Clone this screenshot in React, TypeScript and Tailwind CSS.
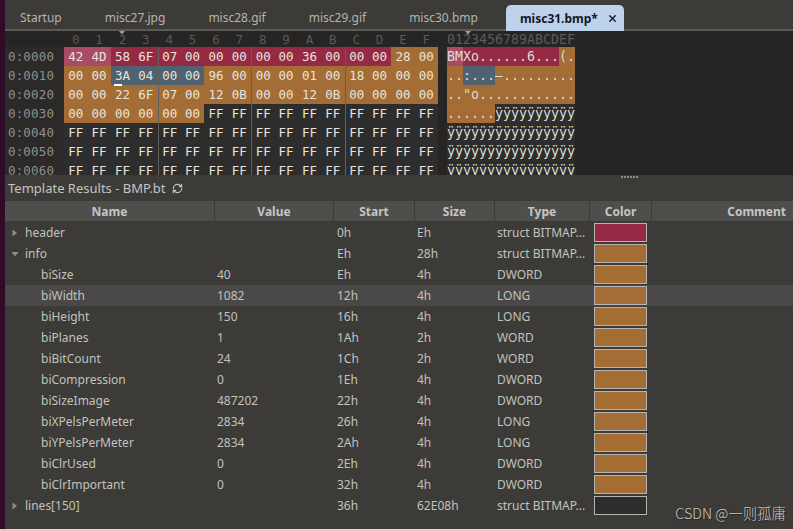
import { RefreshCw, X } from "lucide-react";

const tabs = ["Startup", "misc27.jpg", "misc28.gif", "misc29.gif", "misc30.bmp"];
const rulerHex = "0123456789ABCDEF".split("");

const FF = Array(16).fill("FF");
const FF_TEXT = "ÿ".repeat(16);

const hexRows = [
  { offset: "0:0000", bytes: "42 4D 58 6F 07 00 00 00 00 00 36 00 00 00 28 00".split(" "), text: "BMXo......6...(." },
  { offset: "0:0010", bytes: "00 00 3A 04 00 00 96 00 00 00 01 00 18 00 00 00".split(" "), text: "..:...–........." },
  { offset: "0:0020", bytes: "00 00 22 6F 07 00 12 0B 00 00 12 0B 00 00 00 00".split(" "), text: '.."o............' },
  { offset: "0:0030", bytes: "00 00 00 00 00 00 FF FF FF FF FF FF FF FF FF FF".split(" "), text: "......ÿÿÿÿÿÿÿÿÿÿ" },
  { offset: "0:0040", bytes: FF, text: FF_TEXT },
  { offset: "0:0050", bytes: FF, text: FF_TEXT },
  { offset: "0:0060", bytes: FF, text: FF_TEXT },
];

function byteColor(row: number, col: number) {
  if (row === 0) {
    if (col < 2) return "bg-[#a94b65]";
    if (col < 14) return "bg-[#962a45]";
    return "bg-[#a46d35]";
  }
  if (row === 1) return col >= 2 && col < 6 ? "bg-[#50626f]" : "bg-[#a46d35]";
  if (row === 2) return "bg-[#a46d35]";
  if (row === 3) return col < 6 ? "bg-[#a46d35]" : "bg-[#2d2d2d]";
  return "bg-[#2d2d2d]";
}

const columns = [
  { label: "Name", width: "w-[210px]" },
  { label: "Value", width: "w-[119px]" },
  { label: "Start", width: "w-[81px]" },
  { label: "Size", width: "w-[80px]" },
  { label: "Type", width: "w-[95px]" },
  { label: "Color", width: "w-[62px]" },
];

const results = [
  { name: "header", value: "", start: "0h", size: "Eh", type: "struct BITMAP...", color: "bg-[#962a45]", arrow: "right" },
  { name: "info", value: "", start: "Eh", size: "28h", type: "struct BITMAP...", color: "bg-[#a46d35]", arrow: "down" },
  { name: "biSize", value: "40", start: "Eh", size: "4h", type: "DWORD", color: "bg-[#a46d35]" },
  { name: "biWidth", value: "1082", start: "12h", size: "4h", type: "LONG", color: "bg-[#a46d35]", active: true },
  { name: "biHeight", value: "150", start: "16h", size: "4h", type: "LONG", color: "bg-[#a46d35]" },
  { name: "biPlanes", value: "1", start: "1Ah", size: "2h", type: "WORD", color: "bg-[#a46d35]" },
  { name: "biBitCount", value: "24", start: "1Ch", size: "2h", type: "WORD", color: "bg-[#a46d35]" },
  { name: "biCompression", value: "0", start: "1Eh", size: "4h", type: "DWORD", color: "bg-[#a46d35]" },
  { name: "biSizeImage", value: "487202", start: "22h", size: "4h", type: "DWORD", color: "bg-[#a46d35]" },
  { name: "biXPelsPerMeter", value: "2834", start: "26h", size: "4h", type: "LONG", color: "bg-[#a46d35]" },
  { name: "biYPelsPerMeter", value: "2834", start: "2Ah", size: "4h", type: "LONG", color: "bg-[#a46d35]" },
  { name: "biClrUsed", value: "0", start: "2Eh", size: "4h", type: "DWORD", color: "bg-[#a46d35]" },
  { name: "biClrImportant", value: "0", start: "32h", size: "4h", type: "DWORD", color: "bg-[#a46d35]" },
  { name: "lines[150]", value: "", start: "36h", size: "62E08h", type: "struct BITMAP...", color: "bg-[#2d2d2d]", arrow: "right" },
];

function Arrow({ dir }: { dir?: string }) {
  if (!dir) return null;
  return (
    <svg width="8" height="8" viewBox="0 0 8 8" className="absolute left-[6px] top-[7px]">
      {dir === "right" ? <path d="M1.5 0.5 L6 4 L1.5 7.5 Z" fill="#8d8d8b" /> : <path d="M0.5 2 L7.5 2 L4 6.5 Z" fill="#8d8d8b" />}
    </svg>
  );
}

export default function App() {
  return (
    <div className="relative flex h-[529px] w-[793px] overflow-hidden bg-[#3c3b37] font-['Noto_Sans',sans-serif]">
      <div className="w-[5px] shrink-0 bg-[#2f0b25]" />
      <div className="flex min-w-0 flex-1 flex-col">
        {/* tab strip */}
        <div className="flex h-[31px] shrink-0 items-end border-b-2 border-[#5b5a57] pl-[15px] text-[12px]">
          <div className="flex h-[25px] items-center gap-[43px] pt-[3px] text-[#b4b4b1]">
            {tabs.map((t) => (
              <span key={t}>{t}</span>
            ))}
          </div>
          <div className="ml-[28px] -mb-[2px] flex h-[26px] w-[118px] items-center rounded-t-[5px] bg-[#bdd3ec] pl-[14px] pt-[1px] font-bold text-[#15181c]">
            misc31.bmp*
            <X size={11} strokeWidth={3} className="ml-[9px]" />
          </div>
        </div>

        {/* hex editor */}
        <div className="h-[144px] shrink-0 overflow-hidden bg-[#262524] font-['DejaVu_Sans_Mono',monospace] text-[12.5px] leading-[19px]">
          <div className="relative flex h-[16px] items-center pt-[1px] text-[#5a5a58]">
            <div className="w-[59px] shrink-0" />
            <div className="grid w-[374px] shrink-0 grid-cols-[repeat(16,23.375px)] text-center">
              {rulerHex.map((c) => (
                <span key={c}>{c}</span>
              ))}
            </div>
            <div className="ml-[9px] grid w-[128px] shrink-0 grid-cols-[repeat(16,8px)] text-center text-[13.3px]">
              {rulerHex.map((c) => (
                <span key={c}>{c}</span>
              ))}
            </div>
            <svg width="6" height="4" viewBox="0 0 6 4" className="absolute left-[114px] top-0">
              <path d="M0 0 L6 0 L3 3.5 Z" fill="#a0a09e" />
            </svg>
            <svg width="6" height="4" viewBox="0 0 6 4" className="absolute left-[460px] top-0">
              <path d="M0 0 L6 0 L3 3.5 Z" fill="#a0a09e" />
            </svg>
          </div>
          {hexRows.map((row, r) => (
            <div key={row.offset} className="flex h-[19px]">
              <div className="w-[59px] shrink-0 bg-[#2b2a29] pl-[3px] tracking-[0.15px] text-[#8f8f8c]">{row.offset}</div>
              <div className="grid w-[374px] shrink-0 grid-cols-[repeat(16,23.375px)] text-center text-[#e8e4dc]">
                {row.bytes.map((b, c) => (
                  <span
                    key={c}
                    className={`relative ${byteColor(r, c)} ${c % 4 === 0 && c > 0 ? "border-l border-[#62615e]" : ""}`}
                  >
                    {b}
                    {r === 1 && c === 2 && (
                      <span className="absolute bottom-[-1px] left-[3px] z-10 h-[2px] w-[8px] bg-white" />
                    )}
                  </span>
                ))}
              </div>
              <div className="ml-[9px] grid w-[128px] shrink-0 grid-cols-[repeat(16,8px)] text-center text-[13.3px] text-[#dcdad4]">
                {row.text.split("").map((ch, c) => (
                  <span key={c} className={byteColor(r, c)}>
                    {ch}
                  </span>
                ))}
              </div>
            </div>
          ))}
        </div>

        {/* template results */}
        <div className="relative flex h-[26px] shrink-0 items-center gap-[7px] pl-[3px] pt-[1px] text-[13px] text-[#c4c4c1]">
          <span>Template Results - BMP.bt</span>
          <RefreshCw size={11} strokeWidth={2.5} className="text-[#c4c4c1]" />
          <div className="absolute left-[616px] top-[1px] flex gap-[1px]">
            {[0, 1, 2, 3, 4, 5].map((d) => (
              <span key={d} className="h-[2px] w-[2px] bg-[#8a8a88]" />
            ))}
          </div>
        </div>

        <div className="flex h-[20px] shrink-0 bg-[#4e4e4c] text-[12px] font-bold text-[#c5c5c3]">
          {columns.map((c) => (
            <div key={c.label} className={`${c.width} shrink-0 border-r border-[#3c3b37] pt-[1px] text-center leading-[20px]`}>
              {c.label}
            </div>
          ))}
          <div className="flex-1 pr-[7px] pt-[1px] text-right leading-[20px]">Comment</div>
        </div>

        <div className="mt-[1px] text-[12px] text-[#c2c2bf]">
          {results.map((r) => {
            const indent = r.arrow ? "pl-[20px]" : "pl-[36px]";
            return (
              <div key={r.name} className={`flex h-[21px] items-center ${r.active ? "bg-[#4a4947]" : ""}`}>
                <div className={`relative h-full w-[210px] shrink-0 leading-[21px] ${indent}`}>
                  <Arrow dir={r.arrow} />
                  {r.name}
                </div>
                <div className="w-[119px] shrink-0 pl-[2px]">{r.value}</div>
                <div className="w-[81px] shrink-0 pl-[3px]">{r.start}</div>
                <div className="w-[80px] shrink-0 pl-[2px]">{r.size}</div>
                <div className="w-[95px] shrink-0 pl-[2px]">{r.type}</div>
                <div className="w-[62px] shrink-0 pl-[4px]">
                  <div className={`h-[19px] w-[53px] border border-[#b4b4b2] ${r.color}`} />
                </div>
              </div>
            );
          })}
        </div>
      </div>

      <div className="absolute bottom-[5px] right-[7px] font-['Noto_Sans_CJK_SC',sans-serif] text-[14.4px] font-light text-[#c8c8c6] [text-shadow:1px_1px_1px_#222]">
        CSDN @一则孤庸
      </div>
    </div>
  );
}
